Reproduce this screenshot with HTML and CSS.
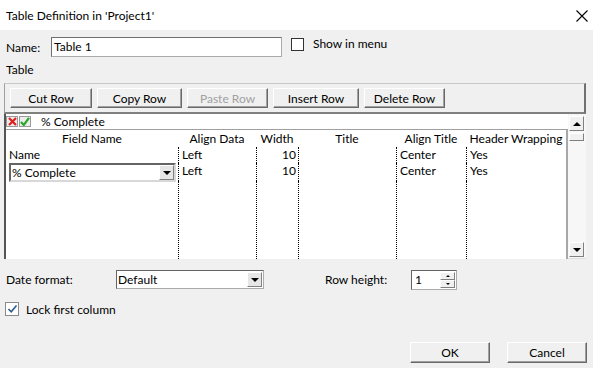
FILE: index.html
```html
<!DOCTYPE html>
<html>
<head>
<meta charset="utf-8">
<link rel="stylesheet" href="styles.css">
</head>
<body>
<div class="dialog">
  <div class="titlebar">
    <span class="title">Table Definition in 'Project1'</span>
    <svg class="close" width="12" height="12" viewBox="0 0 12 12"><path d="M0.5 0.5 L11.5 11.5 M11.5 0.5 L0.5 11.5" stroke="#000" stroke-width="1.1" fill="none"/></svg>
  </div>
  <div class="content">
    <div class="name-row">
      <span class="lbl-name">Name:</span>
      <div class="textbox name-input">Table 1</div>
      <span class="checkbox"></span>
      <span class="chk-label">Show in menu</span>
    </div>
    <div class="section-label">Table</div>
    <div class="table-ctl">
      <div class="toolbar">
        <button class="btn w-cut">Cut Row</button>
        <button class="btn w-copy">Copy Row</button>
        <button class="btn w-paste disabled">Paste Row</button>
        <button class="btn w-insert">Insert Row</button>
        <button class="btn w-delete">Delete Row</button>
      </div>
      <div class="grid-area">
        <div class="grid-main">
          <div class="edit-row">
            <span class="mini-btn">
              <svg width="9" height="9" viewBox="0 0 9 9"><path d="M1 1 L8 8 M8 1 L1 8" stroke="#e0201c" stroke-width="2.2" fill="none"/></svg>
            </span>
            <span class="mini-btn">
              <svg width="10" height="9" viewBox="0 0 10 9"><path d="M1 5 L3.8 8 L9 0.8" stroke="#2aa82a" stroke-width="2.2" fill="none"/></svg>
            </span>
            <span class="edit-text">% Complete</span>
          </div>
          <div class="grid">
            <div class="hcell">Field Name</div>
            <div class="hcell">Align Data</div>
            <div class="hcell">Width</div>
            <div class="hcell">Title</div>
            <div class="hcell">Align Title</div>
            <div class="hcell">Header Wrapping</div>

            <div class="cell first">Name</div>
            <div class="cell div">Left</div>
            <div class="cell div num">10</div>
            <div class="cell div"></div>
            <div class="cell div">Center</div>
            <div class="cell div">Yes</div>

            <div class="cell first combo-cell">
              <div class="combo">
                <span class="combo-text">% Complete</span>
                <span class="drop-btn"><span class="tri"></span></span>
              </div>
            </div>
            <div class="cell div">Left</div>
            <div class="cell div num">10</div>
            <div class="cell div"></div>
            <div class="cell div">Center</div>
            <div class="cell div">Yes</div>

            <div class="cell first"></div>
            <div class="cell div"></div>
            <div class="cell div"></div>
            <div class="cell div"></div>
            <div class="cell div"></div>
            <div class="cell div"></div>
          </div>
        </div>
        <div class="vscroll">
          <span class="sb-btn"><span class="tri up"></span></span>
          <span class="sb-thumb"></span>
          <span class="sb-track"></span>
          <span class="sb-btn"><span class="tri"></span></span>
        </div>
      </div>
    </div>
    <div class="options-row">
      <span class="lbl-date">Date format:</span>
      <div class="select">
        <span class="select-text">Default</span>
        <span class="drop-btn"><span class="tri"></span></span>
      </div>
      <span class="lbl-row">Row height:</span>
      <div class="spinner">
        <span class="spin-text">1</span>
        <span class="spin-btns">
          <span class="spin-btn"><span class="tri up small"></span></span>
          <span class="spin-btn"><span class="tri small"></span></span>
        </span>
      </div>
    </div>
    <div class="lock-row">
      <span class="checkbox checked">
        <svg width="11" height="10" viewBox="0 0 11 10"><path d="M1.5 5 L4.2 7.8 L9.5 1.5" stroke="#2b5e8c" stroke-width="1.6" fill="none"/></svg>
      </span>
      <span class="chk-label">Lock first column</span>
    </div>
    <div class="footer">
      <button class="btn dlg-btn">OK</button>
      <button class="btn dlg-btn">Cancel</button>
    </div>
  </div>
</div>
</body>
</html>
```

FILE: styles.css
```css
* { box-sizing: border-box; }
html, body {
  margin: 0;
  padding: 0;
}
body {
  width: 593px;
  height: 368px;
  overflow: hidden;
  font-family: "Lato", "Noto Sans", sans-serif;
  font-size: 12px;
  color: #000;
  background: #f0f0f0;
}
.dialog {
  width: 593px;
  height: 368px;
  display: flex;
  flex-direction: column;
}
.titlebar {
  height: 30px;
  background: #fff;
  display: flex;
  align-items: center;
  justify-content: space-between;
  padding: 0 5px 0 6px;
}
.title { font-size: 12px; }
.close { margin-top: 1px; }
.content {
  flex: 1;
  background: #f0f0f0;
  display: flex;
  flex-direction: column;
}
.name-row {
  display: flex;
  align-items: center;
  height: 20px;
  margin-top: 7px;
  padding-left: 6px;
}
.lbl-name { width: 45px; }
.textbox {
  background: #fff;
  border: 1px solid #ababab;
  border-top-color: #6f6f6f;
  border-left-color: #6f6f6f;
  height: 20px;
  line-height: 18px;
  padding-left: 2px;
}
.name-input { width: 231px; }
.checkbox {
  width: 13px;
  height: 13px;
  border: 1px solid #333;
  background: #fff;
  display: inline-flex;
  align-items: center;
  justify-content: center;
}
.name-row .checkbox { margin-left: 9px; margin-top: -6px; }
.name-row .chk-label { margin-left: 9px; margin-top: -7px; }
.section-label {
  height: 16px;
  line-height: 16px;
  margin-top: 5px;
  padding-left: 6px;
}
.table-ctl {
  margin-top: 5px;
  margin-left: 4px;
  width: 582px;
}
.toolbar {
  height: 31px;
  border-top: 1px solid #c8c8c8;
  border-left: 1px solid #a0a0a0;
  border-right: 2px solid #707070;
  border-bottom: 2px solid #808080;
  display: flex;
  gap: 5px;
  padding: 4px 0 0 5px;
}
.btn {
  font-family: inherit;
  font-size: 12px;
  color: #000;
  background: #f0f0f0;
  border: 1px solid;
  border-color: #fff #696969 #696969 #fff;
  box-shadow: inset -1px -1px #a0a0a0;
  height: 20px;
  padding: 0;
  line-height: 17px;
}
.btn.disabled { color: #a0a0a0; }
.w-cut { width: 82px; }
.w-copy { width: 85px; }
.w-paste { width: 81px; }
.w-insert { width: 86px; }
.w-delete { width: 81px; }
.grid-area {
  display: flex;
  height: 145px;
}
.grid-main {
  width: 564px;
  background: #fff;
  border-left: 2px solid #555;
  display: flex;
  flex-direction: column;
}
.edit-row {
  height: 16px;
  border-bottom: 1px solid #a0a0a0;
  display: flex;
  align-items: center;
  padding-left: 0;
}
.mini-btn {
  width: 12px;
  height: 11px;
  border: 1px solid #9a9a9a;
  background: #ececec;
  display: inline-flex;
  align-items: center;
  justify-content: center;
  margin-right: 1px;
}
.edit-text { margin-left: 9px; }
.grid {
  flex: 1;
  display: grid;
  grid-template-columns: 172px 78px 42px 98px 70px 100px;
  grid-template-rows: 17px 16px 18px 1fr;
  border-right: 2px solid #a8a8a8;
}
.hcell {
  text-align: center;
  line-height: 17px;
  white-space: nowrap;
}
.cell {
  line-height: 16px;
  padding-left: 3px;
  white-space: nowrap;
}
.cell.first { padding-left: 3px; }
.cell.div { border-left: 1px dotted #000; }
.cell.num { text-align: right; padding-right: 2px; }
.combo-cell { padding: 0 2px 0 1px; }
.combo {
  height: 19px;
  background: #fff;
  border: 2px solid #d8d8d8;
  border-top-color: #646464;
  border-left-color: #646464;
  display: flex;
  align-items: center;
}
.combo-text { flex: 1; padding-left: 1px; line-height: 15px; }
.drop-btn {
  width: 15px;
  height: 15px;
  background: #e6e6e6;
  border: 1px solid;
  border-color: #fff #808080 #808080 #fff;
  display: inline-flex;
  align-items: center;
  justify-content: center;
}
.tri {
  width: 0;
  height: 0;
  border-left: 4px solid transparent;
  border-right: 4px solid transparent;
  border-top: 4px solid #000;
}
.tri.up {
  border-top: 0;
  border-bottom: 4px solid #000;
}
.tri.small {
  border-left-width: 2px;
  border-right-width: 2px;
  border-top-width: 2px;
}
.tri.up.small {
  border-top-width: 0;
  border-bottom-width: 2px;
}
.vscroll {
  width: 18px;
  display: flex;
  flex-direction: column;
  background: #f7f7f7;
  padding: 2px 2px 1px 1px;
  border-bottom: 1px solid #e0e0e0;
}
.sb-btn {
  height: 15px;
  background: #f0f0f0;
  border: 1px solid;
  border-color: #fff #808080 #808080 #fff;
  display: flex;
  align-items: center;
  justify-content: center;
}
.sb-thumb {
  height: 8px;
  margin-top: 2px;
  background: #f0f0f0;
  border: 1px solid;
  border-color: #fff #808080 #808080 #fff;
}
.sb-track { flex: 1; }
.options-row {
  display: flex;
  align-items: center;
  height: 19px;
  margin-top: 11px;
  padding-left: 6px;
}
.lbl-date { width: 110px; }
.select {
  width: 148px;
  height: 19px;
  background: #fff;
  border: 1px solid #ababab;
  border-top-color: #646464;
  border-left-color: #646464;
  display: flex;
  align-items: center;
  padding-right: 1px;
}
.select-text { flex: 1; padding-left: 1px; }
.lbl-row { margin-left: 61px; width: 86px; }
.spinner {
  width: 46px;
  height: 20px;
  background: #fff;
  border: 1px solid #ababab;
  border-top-color: #646464;
  border-left-color: #646464;
  display: flex;
  align-items: center;
  padding-right: 1px;
}
.spin-text { flex: 1; padding-left: 3px; }
.spin-btns {
  width: 15px;
  display: flex;
  flex-direction: column;
}
.spin-btn {
  height: 8px;
  background: #f0f0f0;
  border: 1px solid;
  border-color: #fff #808080 #808080 #fff;
  display: flex;
  align-items: center;
  justify-content: center;
}
.lock-row {
  display: flex;
  align-items: center;
  height: 16px;
  margin-top: 12px;
  padding-left: 5px;
}
.lock-row .checkbox {
  width: 14px;
  height: 14px;
  border-color: #8a8a8a;
}
.lock-row .chk-label { margin-left: 7px; }
.footer {
  display: flex;
  justify-content: flex-end;
  gap: 17px;
  margin-top: 25px;
  padding-right: 6px;
}
.dlg-btn { width: 80px; height: 21px; }
```
